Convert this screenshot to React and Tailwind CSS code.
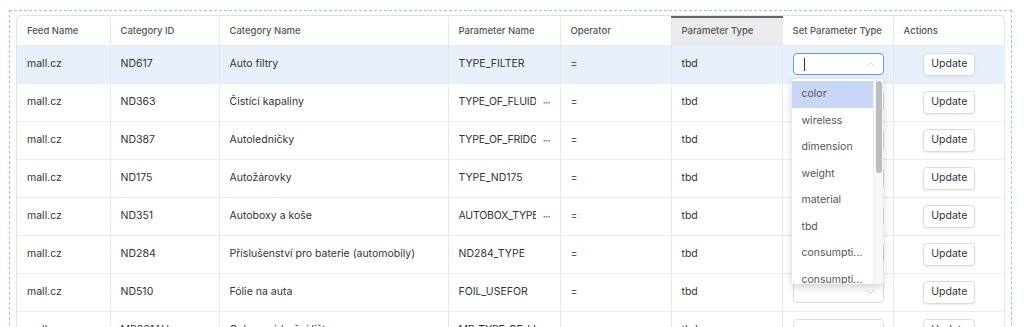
import React from "react";

const ROWS = [
  { feed: "mall.cz", id: "ND617", name: "Auto filtry", param: "TYPE_FILTER", more: false },
  { feed: "mall.cz", id: "ND363", name: "Čistící kapaliny", param: "TYPE_OF_FLUID", more: true },
  { feed: "mall.cz", id: "ND387", name: "Autoledničky", param: "TYPE_OF_FRIDGE", more: true },
  { feed: "mall.cz", id: "ND175", name: "Autožárovky", param: "TYPE_ND175", more: false },
  { feed: "mall.cz", id: "ND351", name: "Autoboxy a koše", param: "AUTOBOX_TYPES", more: true },
  { feed: "mall.cz", id: "ND284", name: "Příslušenství pro baterie (automobily)", param: "ND284_TYPE", more: false },
  { feed: "mall.cz", id: "ND510", name: "Fólie na auta", param: "FOIL_USEFOR", more: false },
  { feed: "mall.cz", id: "MP001AU", name: "Ochranné boční lišty", param: "MP_TYPE_OF_LIŠTY", more: true },
];

const OPTIONS = ["color", "wireless", "dimension", "weight", "material", "tbd", "consumpti...", "consumpti..."];

const COLS = [
  { label: "Feed Name", w: 93 },
  { label: "Category ID", w: 109 },
  { label: "Category Name", w: 229 },
  { label: "Parameter Name", w: 112 },
  { label: "Operator", w: 111 },
  { label: "Parameter Type", w: 111 },
  { label: "Set Parameter Type", w: 111 },
  { label: "Actions", w: 112 },
];

function Chevron({ up }) {
  return (
    <svg width="9" height="6" viewBox="0 0 9 6" className="text-gray-300">
      <path
        d={up ? "M1 5 L4.5 1.5 L8 5" : "M1 1 L4.5 4.5 L8 1"}
        fill="none"
        stroke="currentColor"
        strokeWidth="1"
      />
    </svg>
  );
}

function Dropdown() {
  return (
    <div className="absolute left-[-1px] top-[26px] z-10 flex h-[205px] w-[91px] overflow-hidden rounded-[3px] bg-white shadow-[0_3px_8px_rgba(0,0,0,0.18)]">
      <ul className="w-[81px] pt-[2px]">
        {OPTIONS.map((o, i) => (
          <li
            key={i}
            className={
              "flex h-[26.5px] items-center pl-[10px] text-[10.5px] text-[#555] " +
              (i === 0 ? "bg-[#c9d6f5]" : "")
            }
          >
            {o}
          </li>
        ))}
      </ul>
      <div className="w-[10px] border-l border-[#eee] bg-[#f8f8f8] pt-[2px]">
        <div className="ml-[2px] h-[92px] w-[6px] rounded-full bg-[#bdbdbd]" />
      </div>
    </div>
  );
}

function SelectBox({ open }) {
  return (
    <div className="relative">
      <div
        className={
          "flex h-[22px] w-[91px] items-center justify-between rounded-[4px] border bg-white pl-[10px] pr-[8px] " +
          (open ? "border-[#5b9bea]" : "border-[#dcdcdc]")
        }
      >
        {open ? <span className="h-[13px] w-px bg-[#333]" /> : <span />}
        <Chevron up={open} />
      </div>
      {open && <Dropdown />}
    </div>
  );
}

export default function App() {
  return (
    <div className="min-h-screen bg-white pl-[9px] pt-[10px] pr-[12px] font-['Inter',sans-serif]">
      <div className="border border-dashed border-[#9fc3ee] px-[6px] pt-[4px]">
        <div className="rounded-t-[5px] border border-b-0 border-[#e3e3e3]">
          <table className="w-full table-fixed border-collapse text-[10.5px] text-[#333]">
            <colgroup>
              {COLS.map((c) => (
                <col key={c.label} style={{ width: c.w }} />
              ))}
            </colgroup>
            <thead>
              <tr className="h-[28px]">
                {COLS.map((c, i) => (
                  <th
                    key={c.label}
                    className={
                      "whitespace-nowrap px-[10px] text-left text-[9.5px] font-medium text-[#555] " +
                      (i < COLS.length - 1 ? "border-r border-[#e8e8e8] " : "") +
                      (i === 5 ? "border-t-2 border-t-[#666] bg-[#ebebeb]" : "")
                    }
                  >
                    {c.label}
                  </th>
                ))}
              </tr>
            </thead>
            <tbody>
              {ROWS.map((r, idx) => (
                <tr
                  key={idx}
                  className={"h-[38px] border-t border-[#ececec] " + (idx === 0 ? "bg-[#e7f0fb]" : "")}
                >
                  <td className="border-r border-[#e8e8e8] px-[10px]">{r.feed}</td>
                  <td className="border-r border-[#e8e8e8] px-[10px]">{r.id}</td>
                  <td className="border-r border-[#e8e8e8] px-[10px]">{r.name}</td>
                  <td className="border-r border-[#e8e8e8] px-[10px]">
                    <div className="flex items-center">
                      <span
                        className={
                          "overflow-hidden whitespace-nowrap " +
                          (r.more ? "max-w-[80px] tracking-[-0.2px]" : "")
                        }
                      >
                        {r.param}
                      </span>
                      {r.more && (
                        <span className="ml-[6px] text-[10px] font-bold leading-none tracking-[-1px] text-[#3b8beb]">
                          ···
                        </span>
                      )}
                    </div>
                  </td>
                  <td className="border-r border-[#e8e8e8] px-[10px]">=</td>
                  <td className="border-r border-[#e8e8e8] px-[10px]">tbd</td>
                  <td className="border-r border-[#e8e8e8] px-[10px]">
                    <SelectBox open={idx === 0} />
                  </td>
                  <td className="px-[10px]">
                    <div className="flex justify-center">
                      <button className="h-[23px] w-[52px] rounded-[4px] border border-[#dcdcdc] bg-white text-[10.5px] text-[#333] shadow-[0_1px_2px_rgba(0,0,0,0.08)]">
                        Update
                      </button>
                    </div>
                  </td>
                </tr>
              ))}
            </tbody>
          </table>
        </div>
      </div>
    </div>
  );
}
